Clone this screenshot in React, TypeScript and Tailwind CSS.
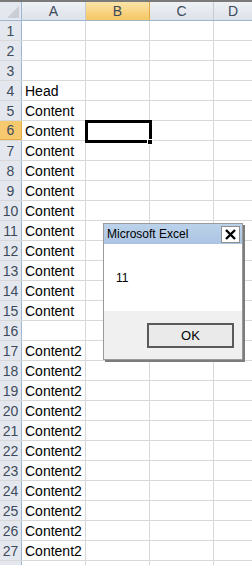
import React from "react";

const rows: string[] = [
  "", "", "", "Head",
  "Content", "Content", "Content", "Content", "Content", "Content",
  "Content", "Content", "Content", "Content", "Content", "",
  "Content2", "Content2", "Content2", "Content2", "Content2", "Content2",
  "Content2", "Content2", "Content2", "Content2", "Content2",
];

function HeaderRow() {
  return (
    <div className="flex h-[19px] border-b border-[#9eb6ce]">
      {/* corner with select-all triangle */}
      <div className="relative w-[22px] shrink-0 border-r border-[#9eb6ce] bg-[#e4e8ee]">
        <svg className="absolute right-[2px] bottom-[2px]" width="12" height="12" viewBox="0 0 12 12">
          <path d="M12 0 L12 12 L0 12 Z" fill="#c9ced6" />
        </svg>
      </div>
      <div className="flex w-[64px] shrink-0 items-center justify-center border-r border-[#c5cbd3] bg-gradient-to-b from-[#eef1f5] to-[#dde2e9] text-[#3c4a5c]">A</div>
      <div className="flex w-[64px] shrink-0 items-center justify-center border-r border-[#e2ab45] bg-gradient-to-b from-[#fbe3a8] to-[#f6c762] text-[#3c4a5c]">B</div>
      <div className="flex w-[64px] shrink-0 items-center justify-center border-r border-[#c5cbd3] bg-gradient-to-b from-[#eef1f5] to-[#dde2e9] text-[#3c4a5c]">C</div>
      <div className="flex flex-1 items-center justify-center bg-gradient-to-b from-[#eef1f5] to-[#dde2e9] text-[#3c4a5c]">D</div>
    </div>
  );
}

function Row({ n, text }: { n: number; text: string }) {
  const active = n === 6;
  return (
    <div className="flex h-[20px] border-b border-[#d8d8d8]">
      <div
        className={
          active
            ? "flex w-[22px] shrink-0 items-center justify-center border-r border-b border-[#e2ab45] bg-[#f7c96e] text-[#3c4a5c]"
            : "flex w-[22px] shrink-0 items-center justify-center border-r border-[#9eb6ce] bg-[#e4e8ee] text-[#3c4a5c]"
        }
      >
        {n}
      </div>
      <div className="flex w-[64px] shrink-0 items-center overflow-visible whitespace-nowrap border-r border-[#d8d8d8] pl-[3px] text-black">
        {text}
      </div>
      <div className="w-[64px] shrink-0 border-r border-[#d8d8d8]" />
      <div className="w-[64px] shrink-0 border-r border-[#d8d8d8]" />
      <div className="flex-1" />
    </div>
  );
}

export default function App() {
  return (
    <div
      className="relative h-[565px] w-[252px] overflow-hidden bg-white text-[14px] leading-none"
      style={{ fontFamily: '"Liberation Sans", Arial, sans-serif' }}
    >
      <div className="h-[2px] bg-[#7a7a7a]" />
      <HeaderRow />
      {rows.map((t, i) => (
        <Row key={i} n={i + 1} text={t} />
      ))}
      {/* partially visible row 28 */}
      <div className="flex h-[20px]">
        <div className="w-[22px] shrink-0 border-r border-[#9eb6ce] bg-[#e4e8ee]" />
        <div className="w-[64px] shrink-0 border-r border-[#d8d8d8]" />
        <div className="w-[64px] shrink-0 border-r border-[#d8d8d8]" />
        <div className="w-[64px] shrink-0 border-r border-[#d8d8d8]" />
      </div>

      {/* selected cell B6 */}
      <div className="absolute left-[85px] top-[120px] h-[23px] w-[67px] border-[3px] border-black" />
      <div className="absolute left-[147px] top-[139px] h-[6px] w-[6px] border border-white bg-black" />

      {/* message box */}
      <div className="absolute left-[103px] top-[223px] w-[140px] border border-[#9a9a9a] bg-white shadow-[2px_2px_0_#7c7c7c]">
        <div className="flex h-[20px] items-center justify-between bg-gradient-to-b from-[#bcd2ea] to-[#abc4e2] pl-[3px] pr-[2px] text-[12px] text-black">
          <span>Microsoft Excel</span>
          <div className="flex h-[17px] w-[19px] items-center justify-center border border-[#8e8e8e] bg-white">
            <svg width="11" height="11" viewBox="0 0 11 11">
              <path d="M1 1 L10 10 M10 1 L1 10" stroke="black" strokeWidth="2.4" />
            </svg>
          </div>
        </div>
        <div className="flex h-[67px] items-center pl-[12px] text-[12px] text-black">11</div>
        <div className="flex h-[48px] items-start justify-end bg-[#f0f0f0] pr-[8px] pt-[12px]">
          <div className="flex h-[25px] w-[87px] items-center justify-center border-2 border-[#5a5a5a] bg-[#eaeaea] text-[13px] text-black">
            OK
          </div>
        </div>
      </div>
    </div>
  );
}
